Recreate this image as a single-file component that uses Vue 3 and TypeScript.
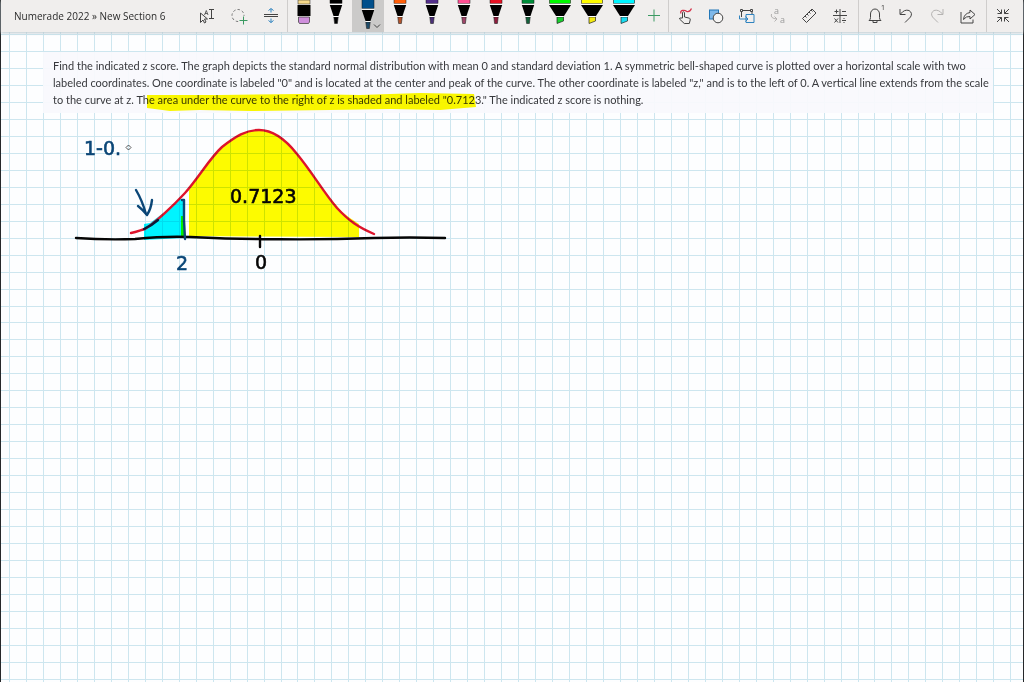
<script setup lang="ts">
interface Pen {
  name: string
  color: string
  tip: string
  kind: 'eraser' | 'pen' | 'marker'
  active?: boolean
}

const pens: Pen[] = [
  { name: 'Eraser', color: '#f5d98b', tip: '#cf8fdc', kind: 'eraser' },
  { name: 'Black pen', color: '#000000', tip: '#000000', kind: 'pen' },
  { name: 'Blue pen', color: '#004f8b', tip: '#1c4a68', kind: 'pen', active: true },
  { name: 'Orange pen', color: '#ff5f0a', tip: '#b5532a', kind: 'pen' },
  { name: 'Purple pen', color: '#54308c', tip: '#4a2f78', kind: 'pen' },
  { name: 'Pink pen', color: '#ff4f93', tip: '#a04468', kind: 'pen' },
  { name: 'Red pen', color: '#e71224', tip: '#8e1b3c', kind: 'pen' },
  { name: 'Green pen', color: '#008c3a', tip: '#14613a', kind: 'pen' },
  { name: 'Green highlighter', color: '#00f900', tip: '#18d02c', kind: 'marker' },
  { name: 'Yellow highlighter', color: '#fffc00', tip: '#f4ea10', kind: 'marker' },
  { name: 'Cyan highlighter', color: '#00f5ff', tip: '#18dcf0', kind: 'marker' },
]

const pitch = 16.97
const columns = Array.from({ length: 160 }, (_, i) => Math.round(8 + i * pitch))
const rows = Array.from({ length: 120 }, (_, i) => Math.round(2 + i * pitch))
</script>

<template>
  <div class="app">
    <header class="bar">
      <h1 class="title">Numerade 2022 » New Section 6</h1>

      <div class="group select-tools">
        <button class="tool" aria-label="Select objects or type text">
          <svg viewBox="0 0 32 32" class="icon">
            <path d="M9.500 13v9.500l2.500-2.500 1.500 3 1.500-1-1.500-3h3z" />
            <path d="M13.500 15l1.800-4.500 1.700 4.500M14 13.500h2.500" class="thin" />
            <path d="M18 9.500h5M18 18.500h5M20.500 9.500v9" />
          </svg>
        </button>
        <button class="tool" aria-label="Lasso select">
          <svg viewBox="0 0 32 32" class="icon">
            <circle cx="15" cy="15.500" r="6" stroke-dasharray="2.500 2" class="soft" />
            <rect x="16" y="16" width="8" height="8" class="mask" />
            <path d="M20.500 16.500v8M16.500 20.500h8" class="green" />
          </svg>
        </button>
        <button class="tool" aria-label="Insert space">
          <svg viewBox="0 0 32 32" class="icon">
            <path d="M9 14.500h14M9 16.500h14" />
            <path d="M16 12.500V9M13.500 10.500l2.500-2 2.500 2M16 18.500v4M13.500 20.500l2.500 2 2.500-2" class="blue" />
          </svg>
        </button>
      </div>

      <div class="group pen-tools">
        <button
          v-for="pen in pens"
          :key="pen.name"
          class="tool"
          :class="{ active: pen.active }"
          :aria-label="pen.name"
        >
          <svg viewBox="0 0 32 32" class="pen">
            <g v-if="pen.kind === 'eraser'">
              <rect x="10" y="0" width="12" height="4" :fill="pen.color" stroke="#222" stroke-width="0.500" />
              <rect x="9.500" y="5" width="13" height="11" fill="#000" />
              <path d="M10.500 17h11v5l-1 1.500h-9l-1-1.500z" :fill="pen.tip" stroke="#333" stroke-width="0.700" />
            </g>
            <g v-else-if="pen.kind === 'pen'" :transform="pen.active ? 'translate(0 5)' : undefined">
              <rect x="10" y="-6" width="12" height="9.500" :fill="pen.color" stroke="#111" stroke-width="0.500" />
              <path d="M9.800 5h12.400L18.500 16h-5z" fill="#000" />
              <path d="M13.800 17h4.400l-0.800 6.500h-2.800z" :fill="pen.tip" stroke="#222" stroke-width="0.600" />
              <path d="M9.500 4.300h13M13.500 16.500h5" stroke="#fff" stroke-width="1" />
            </g>
            <g v-else>
              <rect x="5.500" y="-2" width="21" height="5.500" :fill="pen.color" stroke="#222" stroke-width="0.600" />
              <path d="M5 5h22L20 16h-8z" fill="#000" />
              <path d="M13 17h6.500v4L13 23.500z" :fill="pen.tip" stroke="#222" stroke-width="0.700" />
              <path d="M5 4.300h22M12.500 16.500h7" stroke="#fff" stroke-width="1" />
            </g>
            <path v-if="pen.active" d="M22 24.500l3 3 3-3" fill="none" stroke="#444" stroke-width="1" />
          </svg>
        </button>
        <button class="tool add" aria-label="Add pen">
          <svg viewBox="0 0 28 32" class="icon"><path d="M14 9.500v12M8 15.500h12" class="green" /></svg>
        </button>
      </div>

      <div class="group shape-tools">
        <button class="tool" aria-label="Draw with touch">
          <svg viewBox="0 0 32 32" class="icon">
            <path d="M13.500 18v-5.500q1-1.500 2 0v4.500l5 1.200q1 .5.700 1.800l-.9 3.500h-5l-4.800-4.500q0-1.500 1.500-1z" />
            <path d="M12 13.500q-1-2.500 1.500-3 2.500-.5 4 .800 3 1.400 5-2.800" class="red" />
          </svg>
        </button>
        <button class="tool" aria-label="Shapes">
          <svg viewBox="0 0 32 32" class="icon">
            <rect x="9.500" y="10" width="9" height="9" class="filled" />
            <circle cx="18" cy="18" r="4.800" class="disc" />
          </svg>
        </button>
        <button class="tool" aria-label="Ink to shape">
          <svg viewBox="0 0 32 32" class="icon">
            <path d="M11 10.500h9M10.500 11v6M21 11v3" />
            <path d="M9.500 9.500h2v2h-2zM19.500 9.500h2v2h-2z" />
            <path d="M15 14.500h8v8h-8zM8.500 15.500v3.500h8M14.500 16.500l2.500 2.500-2.500 2.500" class="blue" />
          </svg>
        </button>
        <button class="tool" aria-label="Ink to text" disabled>
          <svg viewBox="0 0 32 32" class="icon faded">
            <text x="12" y="14" class="letter">a</text>
            <text x="18" y="23" class="letter">a</text>
            <path d="M9.500 14q-1.500 4.500 5.500 5M12.500 16.500l2.500 2.500-2.500 2.500" />
          </svg>
        </button>
        <button class="tool" aria-label="Ruler">
          <svg viewBox="0 0 32 32" class="icon">
            <path d="M9.500 18.500l9.500-9.500 4 4-9.500 9.500zM12 16l1.500 1.500M14 14l1.500 1.500M16 12l1.500 1.500M18 10l1.500 1.500" />
          </svg>
        </button>
        <button class="tool" aria-label="Math">
          <svg viewBox="0 0 32 32" class="icon">
            <path d="M9 15.500h14M16 9v14M10.500 11.500h4M12.500 9.500v4M18 11.500h4M10.500 18.500l3.500 4M14 18.500l-3.500 4M18 20.500h4M20 18v1M20 22v1" />
          </svg>
        </button>
      </div>

      <div class="group history-tools">
        <button class="tool" aria-label="Notifications, 1 new">
          <svg viewBox="0 0 32 32" class="icon">
            <path d="M10 20.500q1.500-1 1.500-3v-3.500a4.500 5 0 0 1 9 0v3.500q0 2 1.500 3zM14 21v1.500h4V21" />
            <text x="22" y="10" class="badge">1</text>
          </svg>
        </button>
        <button class="tool" aria-label="Undo">
          <svg viewBox="0 0 32 32" class="icon"><path d="M10 9v5.500h5.500M10.500 14q4-5 8.500-3.500 4 2.500 1.500 6.500L15 22.500" /></svg>
        </button>
        <button class="tool" aria-label="Redo" disabled>
          <svg viewBox="0 0 32 32" class="icon faded"><path d="M22 9v5.500h-5.500M21.500 14q-4-5-8.500-3.500-4 2.500-1.500 6.500l5.500 5.500" /></svg>
        </button>
        <button class="tool" aria-label="Share">
          <svg viewBox="0 0 32 32" class="icon">
            <path d="M9 12v11h12v-3.500" />
            <path d="M18 10l5 4.500-5 4.500v-2.500q-4-.5-6.500 3 .5-6 6.500-7z" />
          </svg>
        </button>
      </div>

      <div class="group view-tools">
        <button class="tool" aria-label="Exit full screen">
          <svg viewBox="0 0 32 32" class="icon">
            <path d="M10 9l4.500 4.500M14.500 9.500v4h-4M22 9l-4.500 4.500M17.500 9.500v4h4M10 22l4.500-4.500M14.500 21.500v-4h-4M22 22l-4.500-4.500M17.500 21.500v-4h4" />
          </svg>
        </button>
      </div>
    </header>

    <main class="page">
      <svg class="grid" aria-hidden="true">
        <rect v-for="x in columns" :key="'c' + x" :x="x" y="0" width="1" height="100%" class="rule" />
        <rect v-for="y in rows" :key="'r' + y" x="0" :y="y" width="100%" height="1" class="rule" />
      </svg>

      <p class="question">
        Find the indicated z score. The graph depicts the standard normal distribution with mean 0 and standard
        deviation 1. A symmetric bell-shaped curve is plotted over a horizontal scale with two labeled coordinates.
        One coordinate is labeled "0" and is located at the center and peak of the curve. The other coordinate is
        labeled "z," and is to the left of 0. A vertical line extends from the scale to the curve at z. The area
        under the curve to the right of z is shaded and labeled "0.7123." The indicated z score is nothing.
      </p>

      <svg class="ink" role="img" aria-label="Bell curve sketch">
        <g transform="translate(-1 -32)">
          <path
            class="wash yellow"
            d="M147 95L220 95 300 94 360 95 420 93 474 94 476 107 440 110 390 109 330 110 250 111 200 110 170 111 147 108z"
          />
          <path
            class="wash yellow"
            d="M189 190C200 174 209 159 222 146C238 135 246 131 259 130C274 130 286 141 297 154C312 173 324 192 337 206C344 215 352 219 359 224V237L189 236z"
          />
          <path class="wash cyan" d="M144 224L150 223 166 211 180 199 184 199 184 238 144 240z" />
          <path class="wash yellow" d="M181 216h3v21h-3z" />
          <path
            class="stroke red"
            d="M131 233C137 232 141 230 145 229C156 222 174 205 185 193C200 176 209 159 222 147C236 136 246 130 259 130C274 130 286 140 297 154C312 172 324 193 337 208C349 221 358 227 374 234"
          />
          <path class="stroke shade" d="M144 229Q151 226 158 220" />
          <path class="stroke black" d="M76 238Q105 240 135 239Q165 236 190 237Q230 239 260 239Q320 240 374 238Q410 237 445 238M260 236v11" />
          <path class="stroke blue-ink" d="M182 200l2 0 0 20 1 19" />
          <path class="stroke blue-ink" d="M136 190Q142 200 146 214M138 206Q142 209 147 215Q151 209 152 200" />
          <path class="cursor" d="M128.500 145l2.500 2.500-2.500 2.500-2.500-2.500z" />
          <text x="230" y="203" class="note black-text">0.7123</text>
          <text x="255" y="269" class="note black-text">0</text>
          <text x="176" y="270" class="note blue-text">2</text>
          <text x="84" y="155" class="note blue-text">1-0.</text>
        </g>
      </svg>
    </main>
  </div>
</template>

<style>
body {
  margin: 0;
}
</style>

<style scoped>
.app {
  display: flex;
  flex-direction: column;
  min-height: 100vh;
  box-sizing: border-box;
  border-left: 1px solid #26282a;
  border-right: 1px solid #26282a;
  background: #fdfeff;
}
.bar {
  display: flex;
  align-items: stretch;
  height: 32px;
  padding: 0 5px 0 13px;
  background: #f0eeed;
  box-shadow: 0 1px 3px #b9c6cc;
  position: relative;
  z-index: 1;
}
.title {
  flex: 1;
  margin: 0;
  font: 400 10px/32px "Open Sans", "Noto Sans", sans-serif;
  color: #2b2b2b;
  white-space: nowrap;
}
.group {
  display: flex;
  box-sizing: border-box;
  border-left: 1px solid #cfcdcc;
}
.select-tools {
  width: 96px;
  border-left: 0;
}
.pen-tools {
  width: 381px;
}
.shape-tools {
  width: 190px;
  padding-right: 2px;
}
.history-tools {
  width: 128px;
  padding-right: 2px;
}
.view-tools {
  width: 32px;
}
.tool {
  flex: 1;
  display: flex;
  align-items: center;
  justify-content: center;
  min-width: 0;
  padding: 0;
  border: 0;
  background: transparent;
}
.pen-tools .tool {
  flex: 0 0 32px;
}
.pen-tools .add {
  flex: 0 0 28px;
}
.tool.active {
  background: #cbcac9;
}
.icon,
.pen {
  flex: none;
  width: 32px;
  height: 32px;
}
.add .icon {
  width: 28px;
}
.icon {
  fill: none;
  stroke: #444;
  stroke-width: 1;
}
.icon .thin {
  stroke-width: 0.8;
}
.icon .soft {
  stroke: #777;
}
.icon .mask {
  fill: #f0eeed;
  stroke: none;
}
.icon .green {
  stroke: #3b9a62;
}
.icon .blue {
  stroke: #2f83bf;
}
.icon .red {
  stroke: #d5344c;
  stroke-width: 1.3;
}
.icon .filled {
  fill: #7fb9ea;
  stroke: #2377b8;
}
.icon .disc {
  fill: #f5f4f3;
}
.faded {
  stroke: #b5b3b2;
}
.letter {
  font: 9px "Open Sans", sans-serif;
  fill: #999;
  stroke: none;
}
.badge {
  font: 7px "Open Sans", sans-serif;
  fill: #333;
  stroke: none;
}
.page {
  flex: 1;
  position: relative;
  overflow: hidden;
}
.grid,
.ink {
  position: absolute;
  inset: 0;
  width: 100%;
  height: 100%;
}
.rule {
  fill: #cde6ef;
}
.question {
  position: relative;
  margin: 20px 30px 0 42px;
  padding: 5px 2px 5px 10px;
  background: rgba(249, 249, 253, 0.94);
  font: 400 11px/17px Lato, sans-serif;
  color: #38393d;
}
.ink {
  mix-blend-mode: multiply;
}
.wash {
  mix-blend-mode: multiply;
}
.yellow {
  fill: #fffc00;
}
.cyan {
  fill: #00f5ff;
}
.stroke {
  fill: none;
  stroke-width: 2.4;
  stroke-linecap: round;
  stroke-linejoin: round;
}
.red {
  stroke: #e0142c;
}
.shade {
  stroke: #0c1c38;
}
.black {
  stroke: #050505;
}
.blue-ink {
  stroke: #0b4778;
}
.cursor {
  fill: #fff;
  stroke: #555;
}
.note {
  font: 400 19px "DejaVu Sans", sans-serif;
  stroke-width: 0.6;
}
.black-text {
  fill: #050505;
  stroke: #050505;
}
.blue-text {
  fill: #0b4778;
  stroke: #0b4778;
}
</style>
